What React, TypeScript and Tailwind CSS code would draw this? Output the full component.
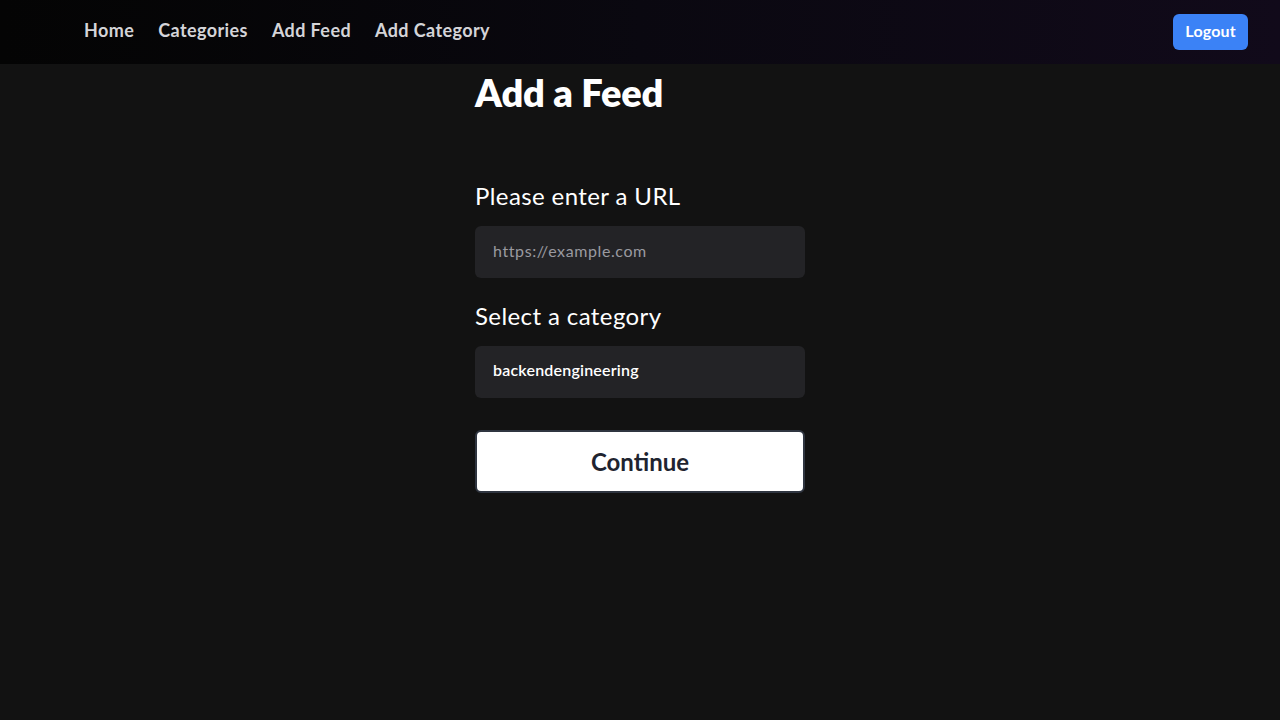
import { useState } from 'react';

const links = ['Home', 'Categories', 'Add Feed', 'Add Category'];

export default function App() {
  const [url, setUrl] = useState('');
  const [category, setCategory] = useState('backendengineering');

  return (
    <div className="min-h-screen bg-[#121212] font-['Lato','Open_Sans',sans-serif] text-white">
      <nav className="flex h-16 items-center justify-between bg-gradient-to-r from-[#040404] via-[#0a0810] to-[#110a1a] pl-[84px] pr-8">
        <div className="flex items-center gap-6 pb-1">
          {links.map((l) => (
            <a key={l} href="#" className="text-[18px] font-bold tracking-[0.4px] text-[#d4d4d8]">
              {l}
            </a>
          ))}
        </div>
        <button className="h-9 rounded-md bg-[#3b82f6] px-3 pb-0.5 text-[16px] font-bold tracking-[0.2px] text-white">
          Logout
        </button>
      </nav>

      <main className="mx-auto w-[330px] pt-2">
        <h1 className="h-10 text-[38px] font-extrabold leading-10 tracking-[-0.2px]">Add a Feed</h1>

        <label className="mt-[69px] block text-[24px] leading-[30px] tracking-[0.4px]">Please enter a URL</label>
        <input
          value={url}
          onChange={(e) => setUrl(e.target.value)}
          placeholder="https://example.com"
          className="mt-[15px] h-[52px] w-full rounded-md bg-[#232326] px-[18px] pb-1 text-[16px] tracking-[0.6px] text-white outline-none placeholder:text-[#9a9aa0]"
        />

        <label className="mt-[23px] block text-[24px] leading-[30px] tracking-[0.4px]">Select a category</label>
        <select
          value={category}
          onChange={(e) => setCategory(e.target.value)}
          className="mt-[15px] h-[52px] w-full appearance-none rounded-md bg-[#232326] px-[18px] pb-1 text-[16px] font-semibold tracking-[0.2px] text-white outline-none"
        >
          <option value="backendengineering">backendengineering</option>
          <option value="frontend">frontend</option>
        </select>

        <button className="mt-8 h-[63px] w-full rounded-md border-2 border-[#2f3540] bg-white text-[24px] font-bold text-[#1f2430]">
          Continue
        </button>
      </main>
    </div>
  );
}
